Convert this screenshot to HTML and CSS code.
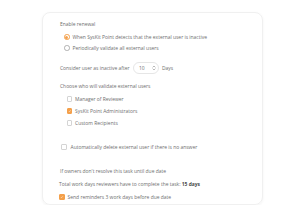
FILE: index.html
```html
<!DOCTYPE html>
<html>
<head>
<meta charset="utf-8">
<link rel="stylesheet" href="styles.css">
</head>
<body>
<div class="card">
  <div class="label first">Enable renewal</div>
  <div class="opts">
    <div class="row"><span class="radio on"></span><span>When SysKit Point detects that the external user is inactive</span></div>
    <div class="row r2"><span class="radio"></span><span>Periodically validate all external users</span></div>
  </div>
  <div class="row inactive">
    <span>Consider user as inactive after</span>
    <span class="num"><span class="val">10</span><svg class="spin" width="4" height="6" viewBox="0 0 4 6"><path d="M0.6 2.4 L2 1 L3.4 2.4 M0.6 3.6 L2 5 L3.4 3.6" fill="none" stroke="#888" stroke-width="0.6"/></svg></span>
    <span>Days</span>
  </div>
  <div class="label choose">Choose who will validate external users</div>
  <div class="opts checks">
    <div class="row"><span class="box"></span><span>Manager of Reviewer</span></div>
    <div class="row c"><span class="box on"><svg width="6" height="6" viewBox="0 0 6 6"><path d="M1.4 3.1 L2.5 4.2 L4.7 1.8" fill="none" stroke="#fff" stroke-width="0.8"/></svg></span><span>SysKit Point Administrators</span></div>
    <div class="row c"><span class="box"></span><span>Custom Recipients</span></div>
  </div>
  <div class="row auto"><span class="box"></span><span>Automatically delete external user if there is no answer</span></div>
  <div class="label owners">If owners don't resolve this task until due date</div>
  <div class="label total">Total work days reviewers have to complete the task: <b>15 days</b></div>
  <div class="row send"><span class="box on"><svg width="6" height="6" viewBox="0 0 6 6"><path d="M1.4 3.1 L2.5 4.2 L4.7 1.8" fill="none" stroke="#fff" stroke-width="0.8"/></svg></span><span>Send reminders 3 work days before due date</span></div>
</div>
</body>
</html>
```

FILE: styles.css
```css
html, body { margin: 0; background: #fff; }
body {
  padding: 12px 0 0 42px;
  font-family: "Open Sans", "Noto Sans", sans-serif;
  font-size: 4.95px;
  color: #6e6e6e;
}
.card {
  box-sizing: border-box;
  width: 221px;
  height: 193px;
  border: 1px solid #f0f0f0;
  border-radius: 8px;
  box-shadow: 0 1px 3px rgba(0,0,0,0.05);
  padding: 0 0 0 17px;
  display: flex;
  flex-direction: column;
}
.label { height: 6px; line-height: 6px; white-space: nowrap; }
.row { display: flex; align-items: center; height: 6px; line-height: 6px; white-space: nowrap; }
.first { margin-top: 8px; }
.opts { margin-left: 4px; display: flex; flex-direction: column; margin-top: 7px; }
.r2 { margin-top: 5px; }
.radio {
  box-sizing: border-box;
  width: 5.5px; height: 5.5px;
  border: 0.6px solid #b0b0b0;
  border-radius: 50%;
  margin-right: 3px;
  display: flex; align-items: center; justify-content: center;
}
.radio.on { border-color: #f4a04b; }
.radio.on::after { content: ""; width: 3px; height: 3px; border-radius: 50%; background: #f4a04b; }
.inactive { margin-top: 11px; height: 12px; }
.num {
  box-sizing: border-box;
  width: 26px; height: 12px;
  border: 0.6px solid #e6e6e6;
  border-radius: 6px;
  margin: 0 3px 0 3.5px;
  display: flex; align-items: center;
  padding-left: 5px;
}
.val { flex: 1; }
.spin { margin-right: 2.5px; }
.choose { margin-top: 9px; }
.checks { margin-top: 7px; margin-left: 6.5px; }
.c { margin-top: 6px; }
.box {
  box-sizing: border-box;
  width: 5.6px; height: 5.6px;
  border: 0.6px solid #d4d4d4;
  border-radius: 1px;
  margin-right: 3px;
  display: flex; align-items: center; justify-content: center;
}
.box.on { background: #f4a04b; border-color: #f4a04b; }
.auto { margin-top: 18px; margin-left: 1px; }
.auto .box { margin-right: 4px; }
.owners { margin-top: 18px; }
.total { margin-top: 7px; margin-left: -1px; }
.total b { color: #4a4a4a; font-weight: 700; }
.send { margin-top: 7px; margin-left: -1px; }
```
